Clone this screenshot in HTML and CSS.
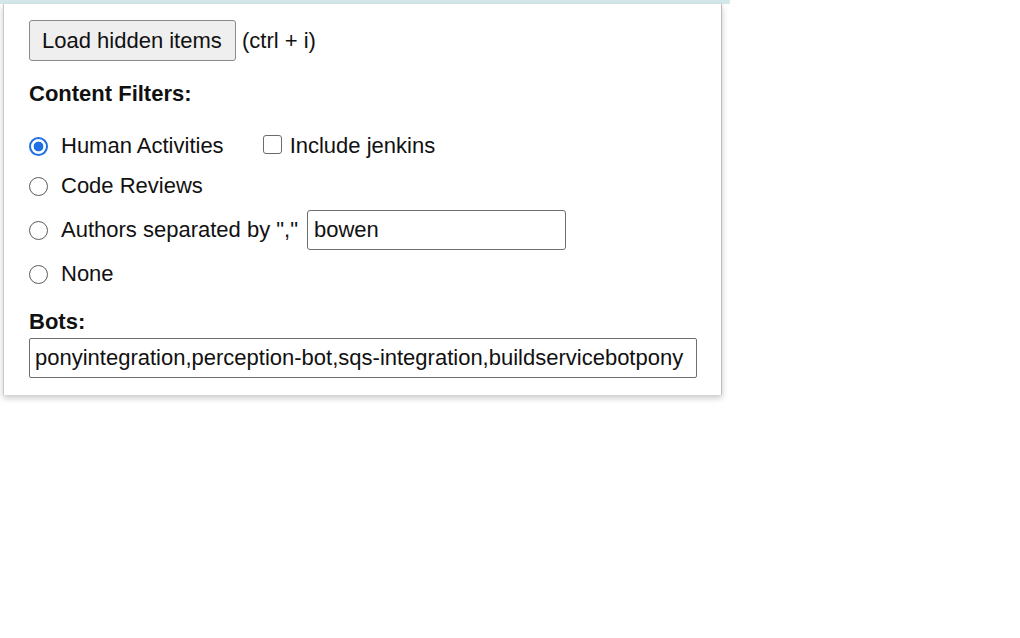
FILE: index.html
```html
<!DOCTYPE html>
<html lang="en">
<head>
<meta charset="utf-8">
<title>Content Filters</title>
<link rel="stylesheet" href="styles.css">
</head>
<body>
<div class="page-bar"></div>
<div class="popup">
  <div class="load-row">
    <button class="btn" type="button">Load hidden items</button>
    <span class="hint">(ctrl + i)</span>
  </div>
  <div class="heading">Content Filters:</div>
  <div class="options">
    <div class="row first-row">
      <label class="opt"><input type="radio" name="filter" class="radio" checked><span>Human Activities</span></label>
      <label class="opt check-opt"><input type="checkbox" class="checkbox"><span>Include jenkins</span></label>
    </div>
    <div class="row">
      <label class="opt"><input type="radio" name="filter" class="radio"><span>Code Reviews</span></label>
    </div>
    <div class="row">
      <label class="opt"><input type="radio" name="filter" class="radio"><span>Authors separated by ","</span></label>
      <input type="text" class="text-input authors" value="bowen">
    </div>
    <div class="row">
      <label class="opt"><input type="radio" name="filter" class="radio"><span>None</span></label>
    </div>
  </div>
  <div class="heading bots-heading">Bots:</div>
  <input type="text" class="text-input bots" value="ponyintegration,perception-bot,sqs-integration,buildservicebotpony">
</div>
</body>
</html>
```

FILE: styles.css
```css
html, body {
  margin: 0;
  padding: 0;
  background: #ffffff;
}

body {
  font-family: "Liberation Sans", Arial, sans-serif;
  font-size: 22px;
  color: #111111;
  width: 1020px;
  height: 638px;
  overflow: hidden;
}

.page-bar {
  width: 730px;
  height: 4px;
  background: #d4e8ea;
}

.popup {
  margin-left: 3px;
  width: 719px;
  height: 391px;
  box-sizing: border-box;
  background: #ffffff;
  border-left: 1px solid #c9c9c9;
  border-right: 1px solid #bdbdbd;
  box-shadow: 0 3px 6px rgba(0, 0, 0, 0.22);
  padding: 16px 0 0 25px;
  display: flex;
  flex-direction: column;
  align-items: flex-start;
}

.load-row {
  display: flex;
  align-items: center;
  gap: 6px;
  height: 41px;
}

.btn {
  font-family: "Liberation Sans", Arial, sans-serif;
  font-size: 22px;
  color: #111111;
  height: 41px;
  width: 207px;
  padding: 0 12px;
  background: #efefef;
  border: 1px solid #8a8a8a;
  border-radius: 3px;
  box-sizing: border-box;
  text-align: left;
  line-height: 39px;
}

.hint {
  line-height: 26px;
}

.heading {
  font-weight: bold;
  line-height: 26px;
  margin-top: 20px;
}

.options {
  margin-top: 19px;
  display: flex;
  flex-direction: column;
  gap: 6px;
}

.row {
  display: flex;
  align-items: center;
  min-height: 36px;
}

.first-row {
  min-height: 32px;
  padding-top: 4px;
}

.opt {
  display: flex;
  align-items: center;
  line-height: 26px;
}

.radio {
  appearance: none;
  -webkit-appearance: none;
  margin: 0 13px 0 0;
  width: 19px;
  height: 19px;
  border: 1.5px solid #5c5c5c;
  border-radius: 50%;
  box-sizing: border-box;
  background: #ffffff;
}

.radio:checked {
  border: 2px solid #1f6fe5;
  background: radial-gradient(circle, #1f6fe5 0 4.6px, #ffffff 5.2px);
}

.check-opt {
  margin-left: 39px;
  margin-top: -1px;
}

.checkbox {
  appearance: none;
  -webkit-appearance: none;
  margin: 0 8px 2px 0;
  width: 19px;
  height: 19px;
  border: 1.5px solid #6b6b6b;
  border-radius: 3px;
  box-sizing: border-box;
  background: #ffffff;
}

.text-input {
  font-family: "Liberation Sans", Arial, sans-serif;
  font-size: 22px;
  color: #111111;
  height: 40px;
  box-sizing: border-box;
  border: 1px solid #6f6f6f;
  border-radius: 3px;
  background: #ffffff;
  outline: none;
}

.authors {
  width: 259px;
  margin-left: 9px;
  padding: 0 6px;
}

.bots-heading {
  margin-top: 17px;
}

.bots {
  width: 668px;
  margin-top: 3px;
  padding: 0 5px;
  border-radius: 2px;
}
```
